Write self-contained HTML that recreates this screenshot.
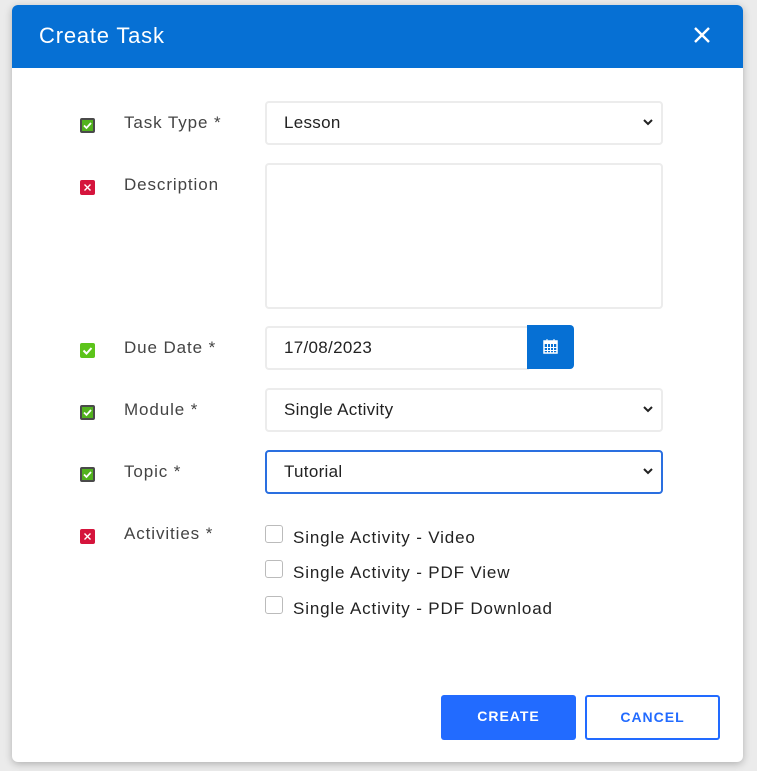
<!DOCTYPE html>
<html><head><style>
body{margin:0;width:757px;height:771px;background:#ebebeb;font-family:"Liberation Sans",sans-serif;position:relative;overflow:hidden}
.modal{position:absolute;left:12px;top:5px;width:731px;height:757px;background:#fff;border-radius:6px;overflow:hidden;box-shadow:0 2px 8px rgba(0,0,0,.25)}
.hdr{height:63px;background:#0670d4;color:#fff;font-size:22px;position:relative;letter-spacing:.8px}
.hdr span{position:absolute;left:27px;top:18px}
.x{position:absolute;left:680px;top:20px}
.ic{position:absolute;left:68px;width:15px;height:15px;border-radius:2px;box-sizing:border-box}
.g{background:#52b21e;border:2px solid #4a4a4a}
.g2{background:#5cc41a}
.r{background:#d5143c}
.lbl{position:absolute;left:112px;font-size:17px;color:#444;letter-spacing:.9px}
.f{position:absolute;left:253px;width:398px;height:44px;border:2px solid #ececec;border-radius:4px;box-sizing:border-box;font-size:17px;color:#222;padding:10px 0 0 17px;letter-spacing:.3px}
.chev{position:absolute;right:7px;top:13px}
.cb{position:absolute;left:253px;width:18px;height:18px;border:1px solid #bbb;border-radius:3px;box-sizing:border-box}
.ct{position:absolute;left:281px;font-size:17px;color:#222;letter-spacing:.85px}
.btn{position:absolute;top:690px;width:135px;height:45px;box-sizing:border-box;border-radius:3px;font-size:14px;font-weight:bold;letter-spacing:1px;text-align:center;line-height:43px}
</style></head><body>
<div class="modal">
<div class="hdr"><span>Create Task</span>
<svg class="x" width="20" height="20" viewBox="0 0 20 20"><path d="M3 3L17 17M17 3L3 17" stroke="#fff" stroke-width="2.4"/></svg></div>
<svg class="ic g" style="top:113px" viewBox="0 0 11 11"><path d="M2 5.5L4.5 8L9 3" stroke="#fff" stroke-width="1.8" fill="none"/></svg>
<div class="lbl" style="top:108px">Task Type *</div>
<div class="f" style="top:96px">Lesson<svg class="chev" width="12" height="12" viewBox="0 0 12 12"><path d="M2 4L6 8L10 4" stroke="#222" stroke-width="2" fill="none"/></svg></div>
<svg class="ic r" style="top:175px" viewBox="0 0 15 15"><path d="M4.5 4.5L10.5 10.5M10.5 4.5L4.5 10.5" stroke="#fff" stroke-width="1.4"/></svg>
<div class="lbl" style="top:170px">Description</div>
<div class="f" style="top:158px;height:146px"></div>
<svg class="ic g2" style="top:338px" viewBox="0 0 15 15"><path d="M3.5 7.5L6.5 10.5L11.5 5" stroke="#fff" stroke-width="2" fill="none"/></svg>
<div class="lbl" style="top:333px">Due Date *</div>
<div class="f" style="top:321px;width:264px;border-right:none;border-radius:4px 0 0 4px">17/08/2023</div>
<div style="position:absolute;left:515px;top:320px;width:47px;height:44px;background:#0670d4;border-radius:0 4px 4px 0"><svg style="position:absolute;left:16px;top:13px" width="15" height="16" viewBox="0 0 15 16"><rect x="1" y="3" width="13" height="12" fill="none" stroke="#fff" stroke-width="1.5"/><rect x="1" y="3" width="13" height="3" fill="#fff"/><path d="M4 1v3M11 1v3M1 9.5h13M1 12.5h13M4.5 6v9M7.5 6v9M10.5 6v9" stroke="#fff" stroke-width="1"/></svg></div>
<svg class="ic g" style="top:400px" viewBox="0 0 11 11"><path d="M2 5.5L4.5 8L9 3" stroke="#fff" stroke-width="1.8" fill="none"/></svg>
<div class="lbl" style="top:395px">Module *</div>
<div class="f" style="top:383px">Single Activity<svg class="chev" width="12" height="12" viewBox="0 0 12 12"><path d="M2 4L6 8L10 4" stroke="#222" stroke-width="2" fill="none"/></svg></div>
<svg class="ic g" style="top:462px" viewBox="0 0 11 11"><path d="M2 5.5L4.5 8L9 3" stroke="#fff" stroke-width="1.8" fill="none"/></svg>
<div class="lbl" style="top:457px">Topic *</div>
<div class="f" style="top:445px;border-color:#2a6fe0">Tutorial<svg class="chev" width="12" height="12" viewBox="0 0 12 12"><path d="M2 4L6 8L10 4" stroke="#222" stroke-width="2" fill="none"/></svg></div>
<svg class="ic r" style="top:524px" viewBox="0 0 15 15"><path d="M4.5 4.5L10.5 10.5M10.5 4.5L4.5 10.5" stroke="#fff" stroke-width="1.4"/></svg>
<div class="lbl" style="top:519px">Activities *</div>
<div class="cb" style="top:520px"></div><div class="ct" style="top:523px">Single Activity - Video</div>
<div class="cb" style="top:555px"></div><div class="ct" style="top:558px">Single Activity - PDF View</div>
<div class="cb" style="top:591px"></div><div class="ct" style="top:594px">Single Activity - PDF Download</div>
<div class="btn" style="left:429px;background:#226bff;color:#fff">CREATE</div>
<div class="btn" style="left:573px;border:2px solid #226bff;color:#226bff;line-height:41px">CANCEL</div>
</div>
</body></html>
